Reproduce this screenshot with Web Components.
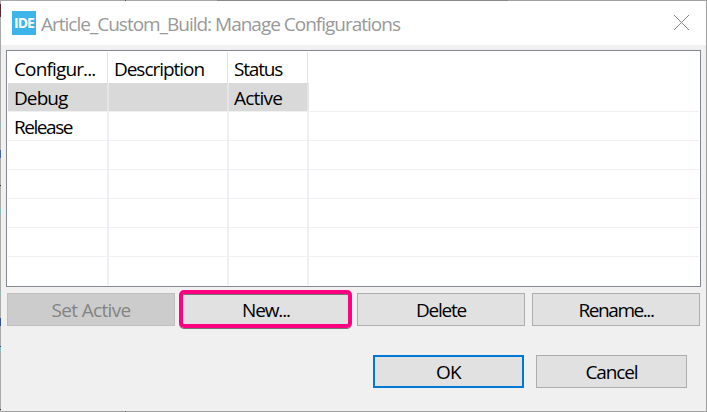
<!DOCTYPE html>
<html lang="en">
<head>
<meta charset="utf-8">
<title>Manage Configurations</title>
<style>
	html, body { height: 100%; margin: 0; overflow: hidden; }
	body { font: 19px/28px "Open Sans", "Noto Sans", sans-serif; }
</style>
</head>
<body>
<config-dialog>
	<fit-label slot="title" width="359">Article_Custom_Build: Manage Configurations</fit-label>
	<config-table></config-table>
	<push-button slot="actions" disabled><fit-label width="79">Set Active</fit-label></push-button>
	<push-button slot="actions" marked><fit-label width="48">New...</fit-label></push-button>
	<push-button slot="actions"><fit-label width="50">Delete</fit-label></push-button>
	<push-button slot="actions"><fit-label width="75">Rename...</fit-label></push-button>
	<push-button slot="footer" primary><fit-label width="25">OK</fit-label></push-button>
	<push-button slot="footer"><fit-label width="52">Cancel</fit-label></push-button>
</config-dialog>

<script>
// Text tracked to fill a given advance width.
class FitLabel extends HTMLElement {
	constructor() {
		super();
		this.attachShadow({ mode: 'open' });
		this.shadowRoot.innerHTML = `
			<style>
				:host { display: inline-block; white-space: nowrap; }
			</style>
			<slot></slot>
		`;
	}

	connectedCallback() {
		const natural = this.getBoundingClientRect().width;
		const target = Number(this.getAttribute('width'));
		if (natural && target) {
			this.style.letterSpacing = `${(target - natural) / this.textContent.length}px`;
		}
	}
}

class PushButton extends HTMLElement {
	constructor() {
		super();
		this.attachShadow({ mode: 'open' });
		this.shadowRoot.innerHTML = `
			<style>
				:host {
					box-sizing: border-box;
					display: block;
					height: 33px;
					position: relative;
					width: var(--button-width, 168px);
				}
				button {
					align-items: center;
					background: #e1e1e1;
					border: 1px solid #adadad;
					box-sizing: border-box;
					color: #000;
					display: flex;
					font: inherit;
					height: 100%;
					justify-content: center;
					padding: 0;
					width: 100%;
				}
				:host([disabled]) button {
					background: #ccc;
					border-color: #bfbfbf;
					color: #838383;
				}
				:host([primary]) button { border: 2px solid #0078d7; }
				:host([marked])::after {
					border: 4px solid #ff0080;
					border-radius: 5px;
					box-shadow: 0 1px 0 #777, inset 0 1px 0 #777;
					content: "";
					inset: -3px -2px -2px -3px;
					position: absolute;
				}
			</style>
			<button><slot></slot></button>
		`;
		this.shadowRoot.querySelector('button').disabled = this.hasAttribute('disabled');
	}
}

class ConfigTable extends HTMLElement {
	constructor() {
		super();
		this.attachShadow({ mode: 'open' });
		this.shadowRoot.innerHTML = `
			<style>
				:host {
					background: #fff;
					border: 1px solid #828790;
					box-sizing: border-box;
					color: #000;
					display: flex;
					flex-direction: column;
					height: 237px;
					padding: 1px;
				}
				.row {
					border-bottom: 1px solid #f0f0f0;
					box-sizing: border-box;
					display: grid;
					flex: none;
					grid-template-columns: 101px 120px 80px 1fr;
					height: 29px;
					line-height: 30px;
				}
				.row.head {
					border: 0;
					height: 31px;
					line-height: 28px;
				}
				.row:last-child { border: 0; height: 28px; }
				.row > div {
					border-right: 2px solid #edf1f7;
					box-sizing: border-box;
					height: 28px;
					padding-left: 6px;
				}
				.row > div:nth-child(n+2) { padding-left: 5px; }
				.head > div {
					border-right: 1px solid #e5e5e5;
					height: 31px;
					margin-right: 1px;
					padding-top: 3px;
				}
				.row > div:last-child { border: 0; }
				.selected > div:nth-child(-n+3) {
					background: #d9d9d9;
					border-image: linear-gradient(90deg, #cbd0d5 50%, #e3e5e8 50%) 2;
				}
			</style>
			<div class="row head">
				<div><fit-label width="81.5">Configur...</fit-label></div>
				<div><fit-label width="90">Description</fit-label></div>
				<div><fit-label width="48">Status</fit-label></div>
				<div></div>
			</div>
			<div class="row selected">
				<div><fit-label width="53.5">Debug</fit-label></div>
				<div></div>
				<div><fit-label width="48">Active</fit-label></div>
				<div></div>
			</div>
			<div class="row">
				<div><fit-label width="58">Release</fit-label></div>
				<div></div><div></div><div></div>
			</div>
			${'<div class="row"><div></div><div></div><div></div><div></div></div>'.repeat(5)}
		`;
	}
}

class ConfigDialog extends HTMLElement {
	constructor() {
		super();
		this.attachShadow({ mode: 'open' });
		this.shadowRoot.innerHTML = `
			<style>
				:host {
					background:
						linear-gradient(90deg, #aaa 125px, #555 125px 126px, #aaa 126px 217px, #888 217px 508px, #a0a0a0 508px) 0 0 / 100% 1px no-repeat,
						linear-gradient(#aaa 4px, #5a2830 4px 17px, #aaa 17px 124px, #8bb 124px 127px, #aaa 127px 150px, #46659b 150px 158px, #aaa 158px 185px, #333 185px 186px, #aaa 186px 208px, #8bb 208px 214px, #aaa 214px 292px, #8bb 292px 295px, #aaa 295px 318px, #2d4f8c 318px 326px, #aaa 326px 346px, #2d4f8c 346px 347px, #8bb 347px 352px, #aaa 352px 409px, #333 409px 410px, #aaa 410px) 0 0 / 1px 100% no-repeat,
						linear-gradient(90deg, #a0a0a0 125px, #555 125px 126px, #a0a0a0 126px) 0 100% / 100% 1px no-repeat,
						#a0a0a0;
					box-sizing: border-box;
					display: flex;
					flex-direction: column;
					height: 412px;
					padding: 1px;
					width: 707px;
				}
				header {
					align-items: center;
					background: #fff;
					color: #999;
					display: flex;
					flex: none;
					height: 44px;
					padding: 0 16px 0 11px;
				}
				.logo {
					background: #3cb4e7;
					color: #fff;
					font-size: 14px;
					font-weight: 700;
					height: 24px;
					line-height: 23px;
					margin-right: 5px;
					text-align: center;
					width: 24px;
				}
				.title { flex: 1; margin-top: 2px; }
				.close { display: block; height: 16px; width: 16px; }
				main {
					background: #f0f0f0;
					display: flex;
					flex: 1;
					flex-direction: column;
					padding: 5px 5px 0;
				}
				.actions {
					display: flex;
					gap: 7px;
					padding: 6px 0 0 1px;
				}
				.footer {
					--button-width: 151px;
					display: flex;
					gap: 12px;
					justify-content: flex-end;
					padding: 29px 14px 0 0;
				}
			</style>
			<header>
				<div class="logo"><fit-label width="20">IDE</fit-label></div>
				<div class="title"><slot name="title"></slot></div>
				<svg class="close" viewBox="0 0 16 16" fill="none" stroke="#888">
					<path d="M0 0l15 15M15 0l-15 15"/>
				</svg>
			</header>
			<main>
				<slot></slot>
				<div class="actions"><slot name="actions"></slot></div>
				<div class="footer"><slot name="footer"></slot></div>
			</main>
		`;
	}
}

customElements.define('config-table', ConfigTable);
customElements.define('push-button', PushButton);
customElements.define('config-dialog', ConfigDialog);
customElements.define('fit-label', FitLabel);
</script>
</body>
</html>
